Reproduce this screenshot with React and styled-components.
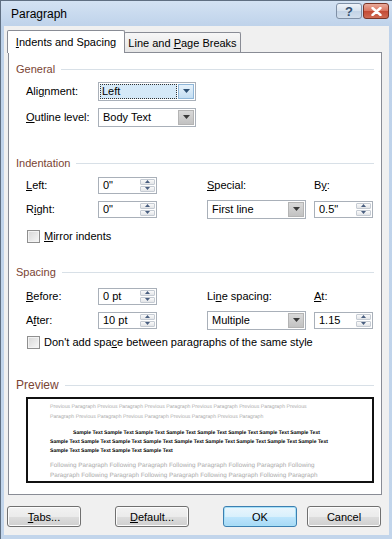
import React from 'react';
import styled, { createGlobalStyle } from 'styled-components';

const GlobalStyle = createGlobalStyle`
  html, body { margin: 0; padding: 0; background: #fff; }
  body {
    font-family: "Liberation Sans", Arial, sans-serif;
    font-size: 11px;
    color: #000;
  }
  * { box-sizing: border-box; }
`;

//-----*-----*-----*-----*-----*-----//

const Window = styled.div`
  width: 392px;
  height: 539px;
  display: flex;
  flex-direction: column;
  background: linear-gradient(#d3e2f3, #bed2ea 26px, #c2d5eb);
  border-top: 1px solid #5f6f82;
  border-left: 1px solid #5f6f82;
  padding: 0 3px 4px 3px;
`;

const TitleBar = styled.div`
  height: 25px;
  display: flex;
  align-items: flex-start;
  padding: 2px 0 0 7px;
`;

const Title = styled.div`
  align-self: center;
  flex: 1;
  font-size: 12px;
  margin-top: -2px;
`;

const CaptionButton = styled.div`
  width: ${p => p.$w}px;
  height: 16px;
  border-radius: 3px;
  display: flex;
  align-items: center;
  justify-content: center;
  font-weight: 700;
  font-size: 13px;
  border: 1px solid ${p => (p.$close ? '#7a3426' : '#7f90a6')};
  background: ${p =>
    p.$close
      ? 'linear-gradient(#e9aa9a, #d9745f 50%, #c44a34 51%, #cf6a52)'
      : 'linear-gradient(#eef3f9, #d6e1ee 50%, #c3d3e6 51%, #d1deec)'};
  color: #34506f;
  margin-left: 1px;
`;

const Client = styled.div`
  flex: 1;
  background: #f0f0f0;
  padding: 4px 7px 0 4px;
  display: flex;
  flex-direction: column;
`;

const TabStrip = styled.div`
  height: 23px;
  display: flex;
  align-items: flex-end;
  margin-bottom: -1px;
  position: relative;
  z-index: 1;
`;

const Tab = styled.div`
  width: ${p => p.$w}px;
  height: ${p => (p.$active ? 23 : 20)}px;
  margin-left: -1px;
  margin-bottom: ${p => (p.$active ? 0 : 1)}px;
  border: 1px solid #898c95;
  border-bottom: none;
  border-radius: 2px 2px 0 0;
  background: ${p => (p.$active ? '#fff' : 'linear-gradient(#f7f7f7, #e6e6e6)')};
  display: flex;
  align-items: center;
  justify-content: center;
  white-space: nowrap;
  padding-bottom: ${p => (p.$active ? 1 : 0)}px;
  position: relative;
  z-index: ${p => (p.$active ? 2 : 1)};
`;

const Panel = styled.div`
  border: 1px solid #898c95;
  background: #fff;
  padding: 8px 7px 11px 7px;
  display: flex;
  flex-direction: column;
`;

const Section = styled.div`
  margin-top: ${p => p.$mt || 0}px;
`;

const Header = styled.div`
  height: 16px;
  display: flex;
  align-items: center;
  color: #7a4433;
  font-size: ${p => (p.$big ? 12 : 11)}px;
  &::after {
    content: '';
    flex: 1;
    height: 1px;
    background: #d8e0e7;
    margin: 1px 0 0 6px;
  }
`;

const Grid = styled.div`
  display: grid;
  grid-template-columns: 72px 59px 50px 99px 8px 58px;
  grid-auto-rows: ${p => p.$row}px;
  align-items: center;
  margin: ${p => p.$mt || 0}px 0 0 10px;
`;

const Label = styled.div`
  grid-column: ${p => p.$col || 'auto'};
  white-space: nowrap;
`;

const FieldBox = styled.div`
  grid-column: ${p => p.$col || 'auto'};
  width: ${p => p.$w}px;
  height: ${p => p.$h}px;
  border: 1px solid #a9b0b9;
  background: #fff;
  display: flex;
  align-items: center;
  padding: 1px 1px 1px 0;
`;

const FieldText = styled.div`
  flex: 1;
  align-self: stretch;
  display: flex;
  align-items: center;
  white-space: nowrap;
  padding-left: ${p => (p.$focus ? 2 : 3)}px;
  margin: 0 ${p => (p.$focus ? 1 : 0)}px 0 1px;
  background: ${p => (p.$focus ? '#d5e9f8' : 'transparent')};
  outline: ${p => (p.$focus ? '1px dotted #333' : 'none')};
  outline-offset: -1px;
`;

const SpinCol = styled.div`
  width: 15px;
  align-self: stretch;
  display: flex;
  flex-direction: column;
  gap: 1px;
`;

const SpinHalf = styled.div`
  flex: 1;
  border: 1px solid #c5cbd3;
  border-radius: 1px;
  background: linear-gradient(#fafafa, #e3e5e8);
  display: flex;
  align-items: center;
  justify-content: center;
`;

const DropBtn = styled.div`
  width: 16px;
  align-self: stretch;
  border: 1px solid ${p => (p.$focus ? '#8fb6d8' : '#b4b4b4')};
  background: ${p =>
    p.$focus
      ? 'linear-gradient(#e6f2fb, #c4def3)'
      : 'linear-gradient(#d9d9d9, #c2c2c2)'};
  display: flex;
  align-items: center;
  justify-content: center;
`;

const CheckRow = styled.div`
  height: 20px;
  margin: ${p => p.$mt || 0}px 0 0 11px;
  display: flex;
  align-items: center;
  gap: 4px;
  white-space: nowrap;
`;

const CheckBox = styled.div`
  width: 13px;
  height: 13px;
  border: 1px solid #8f8f8f;
  background: linear-gradient(135deg, #d6d6d6, #f7f7f7);
  box-shadow: inset 0 0 0 1px #f3f3f3;
`;

const PreviewBox = styled.div`
  margin: 4px 0 0 10px;
  width: 348px;
  height: 86px;
  border: 2px solid #111;
  overflow: hidden;
  padding: 4px 0 0 22px;
  text-rendering: geometricPrecision;
`;

const PreviewPara = styled.div`
  margin-top: ${p => p.$mt || 0}px;
`;

const PreviewLine = styled.div`
  height: ${p => p.$lh}px;
  line-height: ${p => p.$lh}px;
  font-size: ${p => p.$fs}px;
  white-space: nowrap;
  color: ${p => (p.$gray ? '#ababab' : '#000')};
  font-weight: ${p => (p.$gray ? 400 : 700)};
  padding-left: ${p => p.$indent || 0}px;
`;

const ButtonRow = styled.div`
  display: flex;
  margin-top: 11px;
`;

const Button = styled.div`
  width: 74px;
  height: 21px;
  margin-left: ${p => p.$ml}px;
  border: 1px solid ${p => (p.$default ? '#3c7fb1' : '#707070')};
  border-radius: 3px;
  background: ${p =>
    p.$default
      ? 'linear-gradient(#eaf6fd, #d9f0fc 50%, #bee6fd 51%, #a7d9f5)'
      : 'linear-gradient(#f2f2f2, #ebebeb 50%, #dddddd 51%, #cfcfcf)'};
  box-shadow: inset 0 0 0 1px ${p => (p.$default ? '#a8e0f7' : '#fcfcfc')};
  display: flex;
  align-items: center;
  justify-content: center;
`;

//-----*-----*-----*-----*-----*-----//

const Arrow = ({ up, color = '#4a5f80' }) => (
  <svg width="5" height="3" viewBox="0 0 5 3">
    <polygon points={up ? '0,3 5,3 2.5,0' : '0,0 5,0 2.5,3'} fill={color} />
  </svg>
);

const Spinner = ({ value, col }) => (
  <FieldBox $col={col} $w={59} $h={17}>
    <FieldText>{value}</FieldText>
    <SpinCol>
      <SpinHalf><Arrow up /></SpinHalf>
      <SpinHalf><Arrow /></SpinHalf>
    </SpinCol>
  </FieldBox>
);

const Combo = ({ value, col, w, focus }) => (
  <FieldBox $col={col} $w={w} $h={19}>
    <FieldText $focus={focus}>{value}</FieldText>
    <DropBtn $focus={focus}>
      <svg width="7" height="4" viewBox="0 0 7 4">
        <polygon points="0,0 7,0 3.5,4" fill={focus ? '#2d4f72' : '#3a3a3a'} />
      </svg>
    </DropBtn>
  </FieldBox>
);

const prevLines = [
  'Previous Paragraph Previous Paragraph Previous Paragraph Previous Paragraph Previous Paragraph Previous',
  'Paragraph Previous Paragraph Previous Paragraph Previous Paragraph Previous Paragraph',
];
const s = n => Array(n).fill('Sample Text').join(' ');
const sampleLines = [s(8), s(9), s(4)];
const followLines = [
  'Following Paragraph Following Paragraph Following Paragraph Following Paragraph Following',
  'Paragraph Following Paragraph Following Paragraph Following Paragraph Following Paragraph',
  'Following Paragraph Following Paragraph Following Paragraph Following Paragraph Following',
];

export default function App() {
  return (
    <>
      <GlobalStyle />
      <Window>
        <TitleBar>
          <Title>Paragraph</Title>
          <CaptionButton $w={26}>?</CaptionButton>
          <CaptionButton $w={26} $close>
            <svg width="11" height="9" viewBox="0 0 11 9">
              <path d="M1.5 1 L9.5 8 M9.5 1 L1.5 8" stroke="#fff" strokeWidth="2.4" strokeLinecap="round" />
            </svg>
          </CaptionButton>
        </TitleBar>
        <Client>
          <TabStrip>
            <Tab $active $w={118}><span><u>I</u>ndents and Spacing</span></Tab>
            <Tab $w={117}><span>Line and <u>P</u>age Breaks</span></Tab>
          </TabStrip>
          <Panel>
            <Section>
              <Header>General</Header>
              <Grid $row={26} $mt={1}>
                <Label>Ali<u>g</u>nment:</Label>
                <Combo col="2 / 4" w={98} value="Left" focus />
                <Label $col="1"><u>O</u>utline level:</Label>
                <Combo col="2 / 4" w={98} value="Body Text" />
              </Grid>
            </Section>

            <Section $mt={25}>
              <Header>Indentation</Header>
              <Grid $row={24} $mt={2}>
                <Label><u>L</u>eft:</Label>
                <Spinner value={'0"'} />
                <Label $col="4"><u>S</u>pecial:</Label>
                <Label $col="6">B<u>y</u>:</Label>
                <Label $col="1">R<u>i</u>ght:</Label>
                <Spinner value={'0"'} />
                <Combo col="4" w={99} value="First line" />
                <Spinner col="6" value={'0.5"'} />
              </Grid>
              <CheckRow $mt={5}>
                <CheckBox />
                <span><u>M</u>irror indents</span>
              </CheckRow>
            </Section>

            <Section $mt={18}>
              <Header>Spacing</Header>
              <Grid $row={24} $mt={4}>
                <Label><u>B</u>efore:</Label>
                <Spinner value="0 pt" />
                <Label $col="4">Li<u>n</u>e spacing:</Label>
                <Label $col="6"><u>A</u>t:</Label>
                <Label $col="1">A<u>f</u>ter:</Label>
                <Spinner value="10 pt" />
                <Combo col="4" w={99} value="Multiple" />
                <Spinner col="6" value="1.15" />
              </Grid>
              <CheckRow>
                <CheckBox />
                <span>Don't add spa<u>c</u>e between paragraphs of the same style</span>
              </CheckRow>
            </Section>

            <Section $mt={25}>
              <Header $big>Preview</Header>
              <PreviewBox>
                <PreviewPara>
                  {prevLines.map((t, i) => <PreviewLine key={i} $lh={9.5} $fs={5.2} $gray>{t}</PreviewLine>)}
                </PreviewPara>
                <PreviewPara $mt={7}>
                  {sampleLines.map((t, i) => (
                    <PreviewLine key={i} $lh={9} $fs={5.1} $indent={i === 0 ? 23 : 0}>{t}</PreviewLine>
                  ))}
                </PreviewPara>
                <PreviewPara $mt={5}>
                  {followLines.map((t, i) => <PreviewLine key={i} $lh={9.7} $fs={6.3} $gray>{t}</PreviewLine>)}
                </PreviewPara>
              </PreviewBox>
            </Section>
          </Panel>
          <ButtonRow>
            <Button $ml={-1}><span><u>T</u>abs...</span></Button>
            <Button $ml={34}><span><u>D</u>efault...</span></Button>
            <Button $ml={34} $default>OK</Button>
            <Button $ml={10}>Cancel</Button>
          </ButtonRow>
        </Client>
      </Window>
    </>
  );
}
